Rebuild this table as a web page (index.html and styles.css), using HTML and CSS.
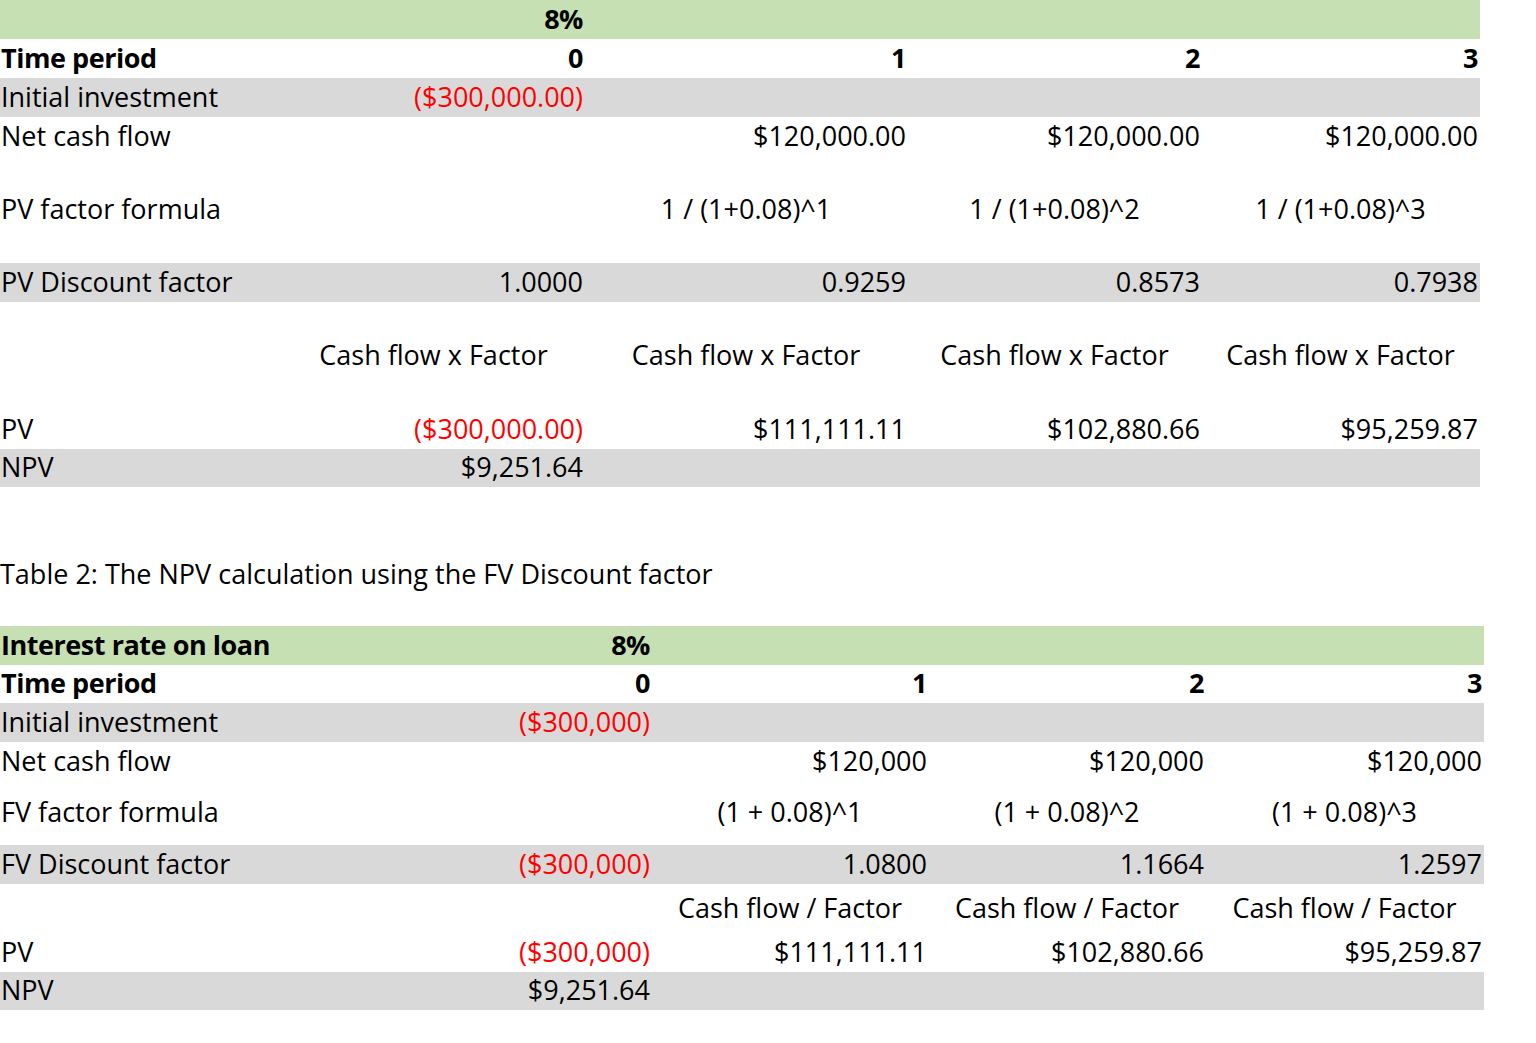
FILE: index.html
```html
<!DOCTYPE html>
<html>
<head>
<meta charset="utf-8">
<link rel="stylesheet" href="styles.css">
</head>
<body>
<div class="sheet">
  <div class="table t1">
    <div class="row green h39">
      <div class="c"></div><div class="c r b">8%</div><div class="c"></div><div class="c"></div><div class="c"></div>
    </div>
    <div class="row h39">
      <div class="c b">Time period</div><div class="c r b">0</div><div class="c r b">1</div><div class="c r b">2</div><div class="c r b">3</div>
    </div>
    <div class="row grey h39">
      <div class="c">Initial investment</div><div class="c r red">($300,000.00)</div><div class="c"></div><div class="c"></div><div class="c"></div>
    </div>
    <div class="row h39">
      <div class="c">Net cash flow</div><div class="c"></div><div class="c r">$120,000.00</div><div class="c r">$120,000.00</div><div class="c r">$120,000.00</div>
    </div>
    <div class="row h107">
      <div class="c">PV factor formula</div><div class="c"></div><div class="c m">1 / (1+0.08)^1</div><div class="c m">1 / (1+0.08)^2</div><div class="c m">1 / (1+0.08)^3</div>
    </div>
    <div class="row grey h39">
      <div class="c">PV Discount factor</div><div class="c r">1.0000</div><div class="c r">0.9259</div><div class="c r">0.8573</div><div class="c r">0.7938</div>
    </div>
    <div class="row h108">
      <div class="c"></div><div class="c m">Cash flow x Factor</div><div class="c m">Cash flow x Factor</div><div class="c m">Cash flow x Factor</div><div class="c m">Cash flow x Factor</div>
    </div>
    <div class="row h39">
      <div class="c">PV</div><div class="c r red">($300,000.00)</div><div class="c r">$111,111.11</div><div class="c r">$102,880.66</div><div class="c r">$95,259.87</div>
    </div>
    <div class="row grey h38">
      <div class="c">NPV</div><div class="c r">$9,251.64</div><div class="c"></div><div class="c"></div><div class="c"></div>
    </div>
  </div>

  <div class="caption">Table 2: The NPV calculation using the FV Discount factor</div>

  <div class="table t2">
    <div class="row green h39">
      <div class="c b">Interest rate on loan</div><div class="c r b">8%</div><div class="c"></div><div class="c"></div><div class="c"></div>
    </div>
    <div class="row h38">
      <div class="c b">Time period</div><div class="c r b">0</div><div class="c r b">1</div><div class="c r b">2</div><div class="c r b">3</div>
    </div>
    <div class="row grey h39">
      <div class="c">Initial investment</div><div class="c r red">($300,000)</div><div class="c"></div><div class="c"></div><div class="c"></div>
    </div>
    <div class="row h39">
      <div class="c">Net cash flow</div><div class="c"></div><div class="c r">$120,000</div><div class="c r">$120,000</div><div class="c r">$120,000</div>
    </div>
    <div class="row h64">
      <div class="c">FV factor formula</div><div class="c"></div><div class="c m">(1 + 0.08)^1</div><div class="c m">(1 + 0.08)^2</div><div class="c m">(1 + 0.08)^3</div>
    </div>
    <div class="row grey h39">
      <div class="c">FV Discount factor</div><div class="c r red">($300,000)</div><div class="c r">1.0800</div><div class="c r">1.1664</div><div class="c r">1.2597</div>
    </div>
    <div class="row h49">
      <div class="c"></div><div class="c"></div><div class="c m">Cash flow / Factor</div><div class="c m">Cash flow / Factor</div><div class="c m">Cash flow / Factor</div>
    </div>
    <div class="row h39">
      <div class="c">PV</div><div class="c r red">($300,000)</div><div class="c r">$111,111.11</div><div class="c r">$102,880.66</div><div class="c r">$95,259.87</div>
    </div>
    <div class="row grey h38">
      <div class="c">NPV</div><div class="c r">$9,251.64</div><div class="c"></div><div class="c"></div><div class="c"></div>
    </div>
  </div>
</div>
</body>
</html>
```

FILE: styles.css
```css
html, body {
  margin: 0;
  padding: 0;
  background: #ffffff;
}
body {
  font-family: "Open Sans", "Liberation Sans", sans-serif;
  font-size: 27px;
  color: #000000;
}
.sheet {
  display: flex;
  flex-direction: column;
}
.table {
  display: flex;
  flex-direction: column;
}
.t1 { width: 1480px; }
.t2 { width: 1484px; }
.row {
  display: grid;
  align-items: center;
}
.t1 .row { grid-template-columns: 283px 302px 323px 294px 278px; }
.t2 .row { grid-template-columns: 375px 277px 277px 277px 278px; }
.green { background: #c6e0b4; }
.grey { background: #d9d9d9; }
.h38 { height: 38px; }
.h39 { height: 39px; }
.h49 { height: 49px; }
.h64 { height: 64px; }
.h107 { height: 107px; }
.h108 { height: 108px; }
.c {
  padding: 0 2px 3px 1px;
  white-space: nowrap;
  line-height: 1;
}
.r { text-align: right; }
.m { text-align: center; }
.b { font-weight: 700; letter-spacing: -0.45px; }
.red { color: #ff0000; }
.caption {
  height: 139px;
  display: flex;
  align-items: center;
  box-sizing: border-box;
  padding-top: 34px;
}
```
